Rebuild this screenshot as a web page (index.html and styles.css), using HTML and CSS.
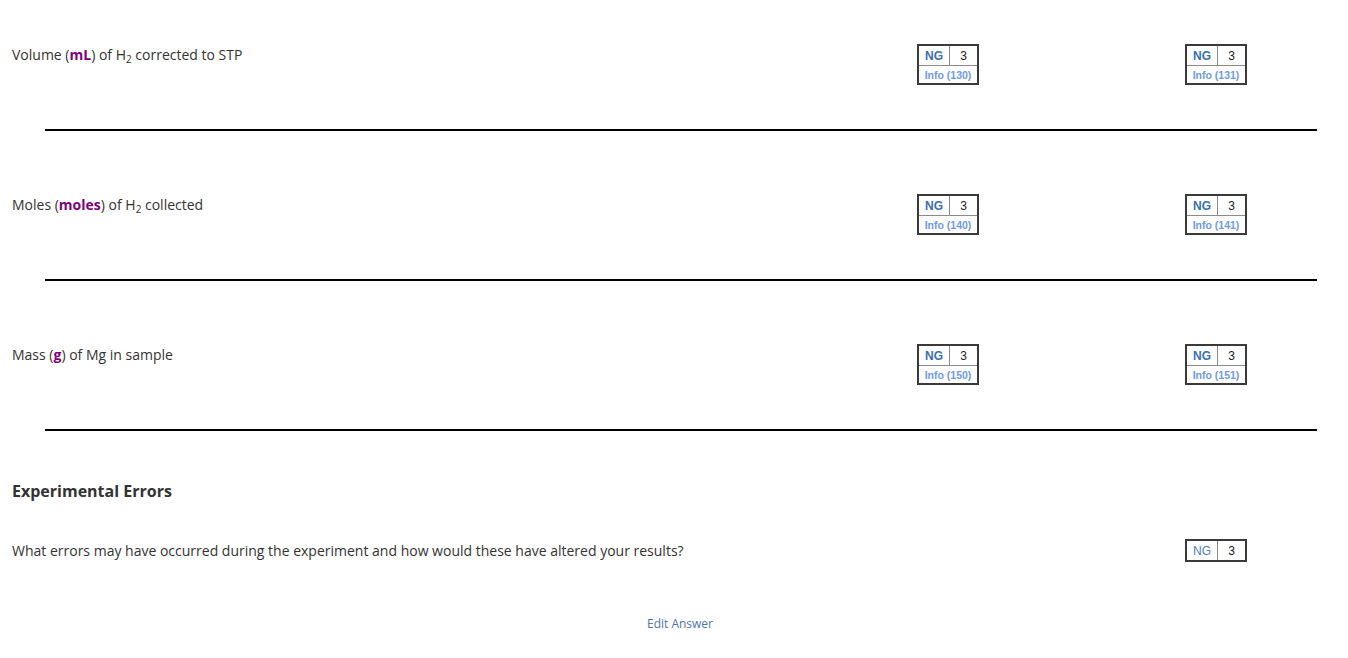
FILE: index.html
```html
<!DOCTYPE html>
<html>
<head>
<meta charset="utf-8">
<link rel="stylesheet" href="styles.css">
</head>
<body>
<div class="page">
  <div class="row">
    <div class="label">Volume (<b class="unit">mL</b>) of H<sub>2</sub> corrected to STP</div>
    <table class="ng"><tr><td class="ng-k">NG</td><td class="ng-v">3</td></tr><tr><td colspan="2" class="ng-info">Info (130)</td></tr></table>
    <table class="ng"><tr><td class="ng-k">NG</td><td class="ng-v">3</td></tr><tr><td colspan="2" class="ng-info">Info (131)</td></tr></table>
  </div>
  <div class="rule"></div>
  <div class="row">
    <div class="label">Moles (<b class="unit">moles</b>) of H<sub>2</sub> collected</div>
    <table class="ng"><tr><td class="ng-k">NG</td><td class="ng-v">3</td></tr><tr><td colspan="2" class="ng-info">Info (140)</td></tr></table>
    <table class="ng"><tr><td class="ng-k">NG</td><td class="ng-v">3</td></tr><tr><td colspan="2" class="ng-info">Info (141)</td></tr></table>
  </div>
  <div class="rule"></div>
  <div class="row">
    <div class="label">Mass (<b class="unit">g</b>) of Mg in sample</div>
    <table class="ng"><tr><td class="ng-k">NG</td><td class="ng-v">3</td></tr><tr><td colspan="2" class="ng-info">Info (150)</td></tr></table>
    <table class="ng"><tr><td class="ng-k">NG</td><td class="ng-v">3</td></tr><tr><td colspan="2" class="ng-info">Info (151)</td></tr></table>
  </div>
  <div class="rule"></div>
  <h2 class="heading">Experimental Errors</h2>
  <div class="row question">
    <div class="label">What errors may have occurred during the experiment and how would these have altered your results?</div>
    <div></div>
    <table class="ng small"><tr><td class="ng-k plain">NG</td><td class="ng-v">3</td></tr></table>
  </div>
  <div class="edit"><a href="#">Edit Answer</a></div>
</div>
</body>
</html>
```

FILE: styles.css
```css
html, body {
  margin: 0;
  padding: 0;
  background: #fff;
}
body {
  font-family: "Open Sans", "Noto Sans", sans-serif;
  font-size: 14px;
  color: #333;
}
.page {
  padding: 0 0 0 12px;
}
.row {
  display: grid;
  grid-template-columns: 905px 268px 1fr;
  align-items: start;
  padding-top: 63px;
}
.row:first-child {
  padding-top: 44px;
}
.label {
  line-height: 20px;
  padding-top: 1px;
}
.label sub {
  font-size: 10px;
  line-height: 0;
  vertical-align: -3px;
}
.unit {
  color: #800080;
  font-weight: 700;
}
.rule {
  margin: 44px 31px 0 33px;
  height: 2px;
  background: #000;
}
.ng {
  border-collapse: collapse;
  border: 2px solid #3a3a3a;
  width: 62px;
  font-family: "Liberation Sans", Arial, sans-serif;
  font-size: 12px;
}
.ng td {
  border: 1px solid #8a8a8a;
  padding: 0;
  text-align: center;
}
.ng-k {
  width: 30px;
  height: 19px;
  color: #3a6fb0;
  font-weight: 700;
}
.ng-k.plain {
  font-weight: 400;
  color: #4a7fc0;
}
.ng-v {
  color: #222;
  font-weight: 400;
}
.ng-info {
  height: 17px;
  font-size: 10.5px;
  font-weight: 700;
  color: #6f9ae8;
}
.heading {
  margin: 49px 0 0;
  font-size: 16px;
  font-weight: 700;
  line-height: 22px;
  color: #333;
}
.row.question {
  padding-top: 37px;
  align-items: center;
}
.ng.small .ng-k,
.ng.small .ng-v {
  height: 19px;
}
.edit {
  text-align: center;
  margin-top: 53px;
  font-size: 12px;
}
.edit a {
  color: #4f74a8;
  text-decoration: none;
}
```
